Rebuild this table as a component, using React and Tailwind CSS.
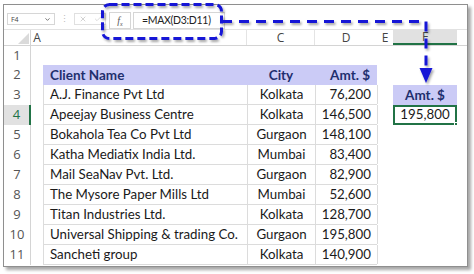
import { ChevronDown, Check, X } from "lucide-react";

const rows = [
  { n: 3, name: "A.J. Finance Pvt Ltd", city: "Kolkata", amt: "76,200" },
  { n: 4, name: "Apeejay Business Centre", city: "Kolkata", amt: "146,500" },
  { n: 5, name: "Bokahola Tea Co Pvt Ltd", city: "Gurgaon", amt: "148,100" },
  { n: 6, name: "Katha Mediatix India Ltd.", city: "Mumbai", amt: "83,400" },
  { n: 7, name: "Mail SeaNav Pvt. Ltd.", city: "Gurgaon", amt: "82,900" },
  { n: 8, name: "The Mysore Paper Mills Ltd", city: "Mumbai", amt: "52,600" },
  { n: 9, name: "Titan Industries Ltd.", city: "Kolkata", amt: "128,700" },
  { n: 10, name: "Universal Shipping & trading Co.", city: "Gurgaon", amt: "195,800" },
  { n: 11, name: "Sancheti group", city: "Kolkata", amt: "140,900" },
];

const cellFont = "font-['Lato',sans-serif] text-[13.3px] text-[#1a1a1a]";
const headFont = "font-['Lato',sans-serif] font-bold text-[13.5px] text-[#1f2f6e]";

function RowNum({ n, active }) {
  return (
    <div
      className={`w-[27px] shrink-0 flex items-center justify-center text-[13px] font-['Open_Sans',sans-serif] ${
        active
          ? "bg-[#e1e1e1] text-[#217346] border-r-2 border-[#217346]"
          : "text-[#555] border-r border-[#d4d4d4]"
      }`}
    >
      {n}
    </div>
  );
}

export default function App() {
  return (
    <div className="w-[474px] h-[274px] bg-white relative">
      <div className="ml-[3px] pt-[4px]">
        <div className="w-[465px] h-[263px] border border-[#8f8f8f] bg-white shadow-[3px_3px_3px_rgba(0,0,0,0.35)] overflow-hidden flex flex-col">
          {/* formula bar */}
          <div className="h-[25px] shrink-0 flex items-start pl-[3px] pt-[7px] border-b border-[#e2e2e2]">
            <div className="mt-[1px] w-[48px] h-[12px] border border-[#d6d6d6] flex items-center justify-between px-[3px]">
              <span className="text-[7px] leading-none text-[#444] font-['Open_Sans',sans-serif]">F4</span>
              <ChevronDown className="w-[7px] h-[7px] text-[#666]" strokeWidth={3} />
            </div>
            <span className="ml-[5px] mt-[2px] text-[9px] text-[#bbb] leading-none">⋮</span>
            <div className="ml-[5px] mt-[1px] w-[32px] h-[12px] border border-[#e0e0e0] flex items-center justify-around">
              <X className="w-[8px] h-[8px] text-[#bbb]" strokeWidth={2} />
              <Check className="w-[8px] h-[8px] text-[#ccc]" strokeWidth={2} />
            </div>
            <div className="ml-[3px] w-[22px] h-[17px] border border-[#d6d6d6] flex items-center justify-center">
              <span className="italic text-[10px] text-[#555] font-['Liberation_Serif',serif]">
                f<sub className="text-[6px]">x</sub>
              </span>
            </div>
            <div className="ml-[2px] w-[92px] h-[17px] border border-[#d6d6d6] flex items-center pl-[8px] text-[10.5px] tracking-[-0.3px] text-[#222] font-['Lato',sans-serif] whitespace-nowrap">
              =MAX(D3:D11)
            </div>
          </div>

          {/* column headers */}
          <div className="h-[16px] shrink-0 flex font-['Open_Sans',sans-serif] text-[12px] text-[#444] border-b border-[#d4d4d4]">
            <div className="w-[27px] shrink-0 border-r border-[#d4d4d4] flex items-end justify-end pb-[1px] pr-[1px]">
              <div className="w-0 h-0 border-l-[11px] border-l-transparent border-b-[11px] border-b-[#dadada]" />
            </div>
            <div className="w-[12px] shrink-0 flex items-center justify-center">A</div>
            <div className="w-[204px] shrink-0 border-r border-[#e4e4e4]" />
            <div className="w-[68px] shrink-0 border-r border-[#e4e4e4] flex items-center justify-center">C</div>
            <div className="w-[62px] shrink-0 flex items-center justify-center">D</div>
            <div className="w-[16px] shrink-0 flex items-center justify-center">E</div>
            <div className="w-[64px] shrink-0 bg-[#e1e1e1] border-b-2 border-[#217346] flex items-center justify-center">F</div>
            <div className="flex-1" />
          </div>

          {/* row 1 */}
          <div className="h-[19px] shrink-0 flex">
            <RowNum n={1} />
          </div>

          {/* row 2 - table header */}
          <div className="h-[20px] shrink-0 flex">
            <RowNum n={2} />
            <div className="w-[12px] shrink-0" />
            <div className={`w-[334px] shrink-0 flex bg-[#cbcbf6] ${headFont}`}>
              <div className="w-[204px] flex items-center pl-[7px]">Client Name</div>
              <div className="w-[68px] flex items-center justify-center">City</div>
              <div className="w-[62px] flex items-center justify-end pr-[7px]">Amt. $</div>
            </div>
          </div>

          {/* data rows */}
          {rows.map((r) => (
            <div key={r.n} className="h-[20px] shrink-0 flex">
              <RowNum n={r.n} active={r.n === 4} />
              <div className="w-[12px] shrink-0" />
              <div className={`w-[334px] shrink-0 flex border-b border-l border-[#dcdcdc] ${cellFont}`}>
                <div className="w-[204px] shrink-0 flex items-center pl-[6px] border-r border-[#dcdcdc] whitespace-nowrap">
                  {r.name}
                </div>
                <div className="w-[68px] shrink-0 flex items-center justify-center border-r border-[#dcdcdc]">
                  {r.city}
                </div>
                <div className="w-[62px] shrink-0 flex items-center justify-end pr-[6px] border-r border-[#dcdcdc]">
                  {r.amt}
                </div>
              </div>
              <div className="w-[16px] shrink-0" />
              {r.n === 3 && (
                <div className={`w-[64px] shrink-0 bg-[#cbcbf6] flex items-center justify-center ${headFont}`}>
                  Amt. $
                </div>
              )}
              {r.n === 4 && (
                <div className={`w-[64px] shrink-0 border-2 border-[#217346] flex items-center justify-center relative ${cellFont}`}>
                  195,800
                  <div className="absolute -right-[3px] -bottom-[3px] w-[4px] h-[4px] bg-[#217346] border border-white" />
                </div>
              )}
            </div>
          ))}
        </div>
      </div>

      {/* callout overlay */}
      <svg className="absolute left-0 top-0 pointer-events-none" width="474" height="274">
        <defs>
          <filter id="sh" x="-10%" y="-10%" width="130%" height="140%">
            <feDropShadow dx="1.5" dy="2" stdDeviation="1.2" floodColor="#000" floodOpacity="0.35" />
          </filter>
        </defs>
        <g filter="url(#sh)" stroke="#1818d6" strokeWidth="3" fill="none">
          <rect x="102.5" y="4.5" width="119" height="34" rx="7" strokeDasharray="8 4" />
          <path d="M222 21.5 H426 V68" strokeDasharray="10 7" />
        </g>
        <polygon points="419.5,68 432.5,68 426,83" fill="#1818d6" filter="url(#sh)" />
      </svg>
    </div>
  );
}
